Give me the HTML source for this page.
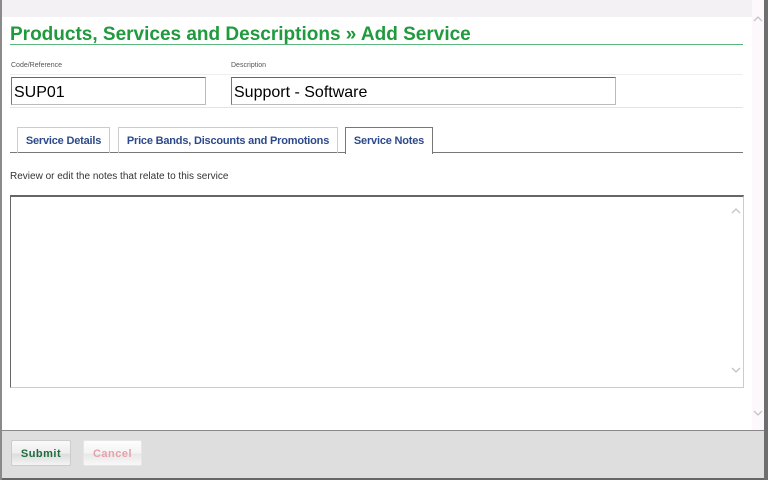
<!DOCTYPE html>
<html><head><style>
*{margin:0;padding:0;box-sizing:border-box}
body{width:768px;height:480px;overflow:hidden;background:#fff;font-family:"Liberation Sans",Arial,sans-serif;position:relative}
.a{position:absolute}
</style></head><body>
<div class="a" style="left:0;top:0;width:2px;height:480px;background:#8a8a8a"></div>
<div class="a" style="left:764px;top:0;width:4px;height:480px;background:#6e6e6e"></div>
<div class="a" style="left:2px;top:0;width:762px;height:17px;background:#f3f1f3"></div>
<div class="a" style="left:752px;top:0;width:12px;height:430px;background:#fcf8fc"></div>
<svg class="a" style="left:753px;top:16px" width="10" height="6"><path d="M1 5L5 1L9 5" fill="none" stroke="#c4c4c4" stroke-width="1.3"/></svg>
<svg class="a" style="left:753px;top:410px" width="10" height="6"><path d="M1 1L5 5L9 1" fill="none" stroke="#c4c4c4" stroke-width="1.3"/></svg>
<div class="a" style="left:10px;top:24px;font-size:19px;font-weight:bold;color:#1f9a3c;white-space:nowrap">Products, Services and Descriptions » Add Service</div>
<div class="a" style="left:10px;top:44px;width:733px;height:1px;background:#5bb57c"></div>
<div class="a" style="left:11px;top:62px;font-size:7px;color:#555">Code/Reference</div>
<div class="a" style="left:231px;top:62px;font-size:7px;color:#555">Description</div>
<div class="a" style="left:10px;top:74px;width:733px;height:1px;background:#eee"></div>
<div class="a" style="left:10px;top:107px;width:733px;height:1px;background:#e4e4e4"></div>
<div class="a" style="left:11px;top:77px;width:195px;height:28px;border:1px solid #bbb;border-top-color:#666;border-left-color:#777;font-size:16px;padding:6px 2px 0">SUP01</div>
<div class="a" style="left:231px;top:77px;width:385px;height:28px;border:1px solid #bbb;border-top-color:#666;border-left-color:#777;font-size:16px;padding:6px 2px 0">Support - Software</div>
<div class="a" style="left:10px;top:152px;width:733px;height:1px;background:#777"></div>
<div class="a" style="left:17px;top:127px;width:93px;height:26px;border:1px solid #ccc;border-bottom:none;font-size:11px;font-weight:bold;color:#2c4a8a;text-align:center;line-height:26px;letter-spacing:-.2px">Service Details</div>
<div class="a" style="left:118px;top:127px;width:220px;height:26px;border:1px solid #ccc;border-bottom:none;font-size:11px;font-weight:bold;color:#2c4a8a;text-align:center;line-height:26px;letter-spacing:-.2px">Price Bands, Discounts and Promotions</div>
<div class="a" style="left:345px;top:127px;width:88px;height:27px;border:1px solid #777;border-bottom:none;background:#fff;font-size:11px;font-weight:bold;color:#2c4a8a;text-align:center;line-height:26px;letter-spacing:-.2px">Service Notes</div>
<div class="a" style="left:10px;top:171px;font-size:10px;color:#333">Review or edit the notes that relate to this service</div>
<div class="a" style="left:10px;top:195px;width:734px;height:193px;border:1px solid #ccc;border-top:2px solid #666;border-left:1px solid #666"></div>
<svg class="a" style="left:731px;top:208px" width="10" height="6"><path d="M1 5L5 1L9 5" fill="none" stroke="#c4c4c4" stroke-width="1.3"/></svg>
<svg class="a" style="left:731px;top:367px" width="10" height="6"><path d="M1 1L5 5L9 1" fill="none" stroke="#c4c4c4" stroke-width="1.3"/></svg>
<div class="a" style="left:2px;top:430px;width:762px;height:50px;background:#dedede;border-top:1px solid #888"></div>
<div class="a" style="left:2px;top:478px;width:762px;height:2px;background:#666"></div>
<div class="a" style="left:11px;top:440px;width:60px;height:26px;border:1px solid #ccc;border-radius:2px;background:linear-gradient(#fafafa,#eee 50%,#ddd 55%,#f4f4f4);font-size:11px;font-weight:bold;color:#1f6b3c;text-align:center;line-height:26px;letter-spacing:.5px">Submit</div>
<div class="a" style="left:83px;top:440px;width:59px;height:26px;border:1px solid #e6e6e6;border-radius:2px;background:linear-gradient(#fdfdfd,#f4f4f4 50%,#e8e8e8 55%,#f8f8f8);font-size:11px;font-weight:bold;color:#e8a0a8;text-align:center;line-height:26px;letter-spacing:.5px">Cancel</div>
</body></html>
